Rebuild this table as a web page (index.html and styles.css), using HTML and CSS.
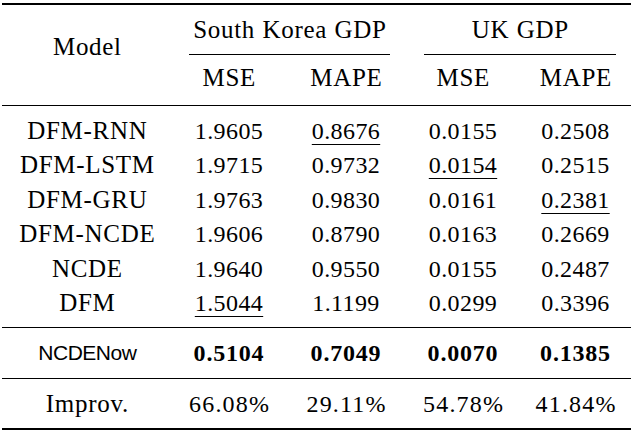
FILE: index.html
```html
<!DOCTYPE html>
<html lang="en">
<head>
<meta charset="utf-8">
<title>GDP nowcasting results</title>
<link rel="stylesheet" href="styles.css">
</head>
<body>
<table class="results">
  <colgroup>
    <col class="col-model">
    <col class="col-sk-mse">
    <col class="col-sk-mape">
    <col class="col-uk-mse">
    <col class="col-uk-mape">
  </colgroup>
  <thead>
    <tr class="group-row">
      <th rowspan="2" class="model-head">Model</th>
      <th colspan="2"><div class="group-label group-sk">South Korea GDP</div></th>
      <th colspan="2"><div class="group-label group-uk">UK GDP</div></th>
    </tr>
    <tr class="metric-row">
      <th>MSE</th>
      <th>MAPE</th>
      <th>MSE</th>
      <th>MAPE</th>
    </tr>
  </thead>
  <tbody class="baselines">
    <tr><td class="name">DFM-RNN</td><td>1.9605</td><td><span class="second">0.8676</span></td><td>0.0155</td><td>0.2508</td></tr>
    <tr><td class="name">DFM-LSTM</td><td>1.9715</td><td>0.9732</td><td><span class="second">0.0154</span></td><td>0.2515</td></tr>
    <tr><td class="name">DFM-GRU</td><td>1.9763</td><td>0.9830</td><td>0.0161</td><td><span class="second">0.2381</span></td></tr>
    <tr><td class="name">DFM-NCDE</td><td>1.9606</td><td>0.8790</td><td>0.0163</td><td>0.2669</td></tr>
    <tr><td class="name">NCDE</td><td>1.9640</td><td>0.9550</td><td>0.0155</td><td>0.2487</td></tr>
    <tr><td class="name">DFM</td><td><span class="second">1.5044</span></td><td>1.1199</td><td>0.0299</td><td>0.3396</td></tr>
  </tbody>
  <tbody class="ours">
    <tr><td class="name"><span class="method">NCDENow</span></td><td class="best">0.5104</td><td class="best">0.7049</td><td class="best">0.0070</td><td class="best">0.1385</td></tr>
  </tbody>
  <tbody class="improv">
    <tr><td class="name">Improv.</td><td class="pct">66.08%</td><td class="pct">29.11%</td><td class="pct">54.78%</td><td class="pct">41.84%</td></tr>
  </tbody>
</table>
</body>
</html>
```

FILE: styles.css
```css
body {
  margin: 0;
  background: #ffffff;
  color: #000000;
}

.results {
  border-collapse: separate;
  border-spacing: 0;
  table-layout: fixed;
  width: 629px;
  margin: 3px 0 0 2px;
  font-family: "Liberation Serif", Tinos, "DejaVu Serif", serif;
  font-size: 24px;
  line-height: 34.5px;
}

.col-model { width: 170px; }
.col-sk-mse { width: 114px; }
.col-sk-mape { width: 120px; }
.col-uk-mse { width: 114px; }
.col-uk-mape { width: 111px; }

.results th,
.results td {
  padding: 0;
  text-align: center;
  font-family: "Liberation Serif", Tinos, "DejaVu Serif", serif;
  font-weight: normal;
  white-space: nowrap;
  letter-spacing: 0.4px;
}

.results th,
.results td.name {
  font-size: 25px;
  letter-spacing: 0.7px;
  word-spacing: 0.5px;
  text-indent: 0.7px;
}

.group-row th {
  border-top: 2px solid #000;
  padding-top: 7.5px;
}

.model-head {
  vertical-align: top;
  border-bottom: 1px solid #000;
}

.results .model-head {
  padding-top: 25px;
}

.group-label {
  padding-bottom: 6.5px;
  border-bottom: 1px solid #000;
}

.group-sk { margin: 0 16px 0 17px; }
.group-uk { margin: 0 15px 0 18px; }

.metric-row th {
  padding: 6px 0 9.5px;
  border-bottom: 1px solid #000;
}

.baselines tr:first-child td { padding-top: 8px; }
.baselines tr:last-child td {
  padding-bottom: 6px;
  border-bottom: 1px solid #000;
}

.results .ours td {
  padding: 7.5px 0;
  border-bottom: 1px solid #000;
}

.results .improv td {
  padding: 7.5px 0 6.5px;
  border-bottom: 2px solid #000;
}

.second {
  text-decoration: underline;
  text-decoration-thickness: 1px;
  text-underline-offset: 5px;
}

.results td.best {
  font-weight: bold;
  letter-spacing: 0.8px;
}

.results td.pct {
  letter-spacing: 1.2px;
  text-indent: 1.2px;
}

.results .method {
  font-family: "Liberation Sans", Arial, sans-serif;
  font-size: 21px;
  letter-spacing: -0.5px;
  word-spacing: 0;
}
```
